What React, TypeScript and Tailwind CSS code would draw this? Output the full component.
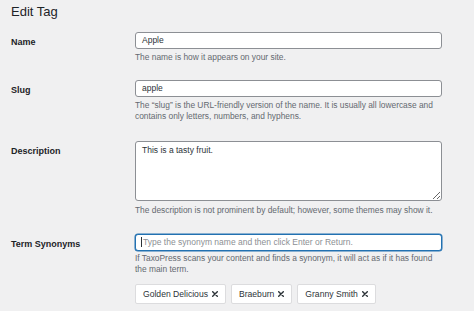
import React from "react";

const font = { fontFamily: "'Liberation Sans', Arial, sans-serif" };

function Label({ children }: { children: React.ReactNode }) {
  return (
    <div className="pt-[2px] text-[9px] leading-[17px] font-bold text-[#1d2327]">{children}</div>
  );
}

function Help({ children, className = "" }: { children: React.ReactNode; className?: string }) {
  return <p className={"text-[8.4px] leading-[11px] text-[#646970] " + className}>{children}</p>;
}

function XIcon() {
  return (
    <svg width="6" height="6" viewBox="0 0 6 6" className="shrink-0">
      <path d="M0.7 0.7 L5.3 5.3 M5.3 0.7 L0.7 5.3" stroke="#2c3338" strokeWidth="1.4" strokeLinecap="round" />
    </svg>
  );
}

function Tag({ name }: { name: string }) {
  return (
    <div className="flex h-[20px] items-center gap-[4px] rounded-[2px] border border-[#dcdcde] bg-white px-[7px] text-[8.6px] text-[#2c3338]">
      <span>{name}</span>
      <XIcon />
    </div>
  );
}

const inputCls =
  "flex h-[17px] items-center rounded-[3px] border border-[#8c8f94] bg-white px-[6px] text-[8.5px] text-[#2c3338]";

export default function App() {
  return (
    <div className="h-[311px] w-[474px] overflow-hidden bg-[#f0f0f1] px-[11px] pt-[2px]" style={font}>
      <h1 className="text-[13px] leading-[20px] font-normal text-[#1d2327]">Edit Tag</h1>
      <div className="mt-[10px] grid grid-cols-[124px_307px]">
        <Label>Name</Label>
        <div>
          <div className={inputCls}>Apple</div>
          <Help className="mt-[2.5px]">The name is how it appears on your site.</Help>
        </div>
      </div>
      <div className="mt-[17.5px] grid grid-cols-[124px_307px]">
        <Label>Slug</Label>
        <div>
          <div className={inputCls}>apple</div>
          <Help className="mt-[2.5px] pr-[8px]">
            The “slug” is the URL-friendly version of the name. It is usually all lowercase and contains only letters,
            numbers, and hyphens.
          </Help>
        </div>
      </div>
      <div className="mt-[19.5px] grid grid-cols-[124px_307px]">
        <Label>Description</Label>
        <div>
          <textarea
            readOnly
            value="This is a tasty fruit."
            className="block h-[60px] w-full rounded-[3px] border border-[#8c8f94] bg-white px-[6px] py-[3px] text-[8.5px] leading-[11px] text-[#2c3338] outline-none"
          />
          <Help className="mt-[4px]">
            The description is not prominent by default; however, some themes may show it.
          </Help>
        </div>
      </div>
      <div className="mt-[17.5px] grid grid-cols-[124px_307px]">
        <Label>Term Synonyms</Label>
        <div>
          <div className="flex h-[17px] items-center rounded-[3px] border border-[#2271b1] bg-white px-[5px] text-[8.5px] text-[#8c8f94] shadow-[0_0_0_0.5px_#2271b1]">
            <span className="mr-[1px] inline-block h-[10px] w-px bg-[#2c3338]" />
            Type the synonym name and then click Enter or Return.
          </div>
          <Help className="mt-[2.5px] pr-[8px]">
            If TaxoPress scans your content and finds a synonym, it will act as if it has found the main term.
          </Help>
          <div className="mt-[9px] flex gap-[5px]">
            <Tag name="Golden Delicious" />
            <Tag name="Braeburn" />
            <Tag name="Granny Smith" />
          </div>
        </div>
      </div>
    </div>
  );
}
